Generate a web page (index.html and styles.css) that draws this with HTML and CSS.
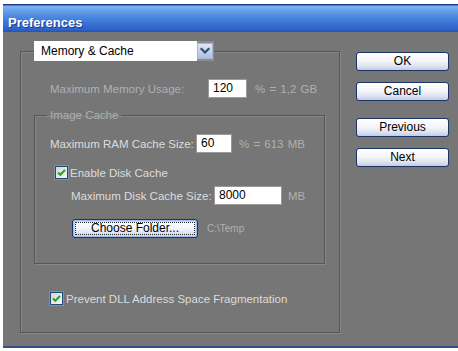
FILE: index.html
```html
<!DOCTYPE html>
<html>
<head>
<meta charset="utf-8">
<title>Preferences</title>
<link rel="stylesheet" href="styles.css">
</head>
<body>
<div class="window">
  <div class="titlebar">Preferences</div>
  <div class="client">
    <fieldset class="group group-outer">
      <legend class="combo-legend">
        <div class="combo">
          <span class="combo-text">Memory &amp; Cache</span>
          <span class="combo-well">
            <span class="combo-btn">
              <svg width="16" height="16" viewBox="0 0 16 16"><path d="M4.5 6 L8 9.5 L11.5 6" fill="none" stroke="#34497a" stroke-width="2.2" stroke-linecap="square"/></svg>
            </span>
          </span>
        </div>
      </legend>
      <div class="outer-body">
        <div class="row row-mem">
          <span class="lbl dim w-mem">Maximum Memory Usage:</span>
          <span class="field f-mem">120</span>
          <span class="unit dim u-mem">% = 1,2 GB</span>
        </div>
        <fieldset class="group group-inner">
          <legend class="inner-legend dim">Image Cache</legend>
          <div class="inner-body">
            <div class="row row-ram">
              <span class="lbl w-ram">Maximum RAM Cache Size:</span>
              <span class="field f-ram">60</span>
              <span class="unit dim u-ram">% = 613 MB</span>
            </div>
            <div class="row row-check">
              <span class="checkbox"><svg width="11" height="11" viewBox="0 0 11 11"><path d="M2 5.5 L4.3 7.8 L9 3" fill="none" stroke="#22a52a" stroke-width="2"/></svg></span>
              <span class="lbl check-lbl">Enable Disk Cache</span>
            </div>
            <div class="row row-disk">
              <span class="lbl w-disk">Maximum Disk Cache Size:</span>
              <span class="field f-disk">8000</span>
              <span class="unit dim u-disk">MB</span>
            </div>
            <div class="row row-folder">
              <button class="btn btn-focus">Choose Folder...</button>
              <span class="path dim">C:\Temp</span>
            </div>
          </div>
        </fieldset>
        <div class="row row-dll">
          <span class="checkbox"><svg width="11" height="11" viewBox="0 0 11 11"><path d="M2 5.5 L4.3 7.8 L9 3" fill="none" stroke="#22a52a" stroke-width="2"/></svg></span>
          <span class="lbl dll-lbl">Prevent DLL Address Space Fragmentation</span>
        </div>
      </div>
    </fieldset>
    <div class="buttons">
      <button class="btn side">OK</button>
      <button class="btn side b-cancel">Cancel</button>
      <button class="btn side b-prev">Previous</button>
      <button class="btn side b-next">Next</button>
    </div>
  </div>
</div>
</body>
</html>
```
FILE: styles.css
```css
html, body {
  margin: 0;
  padding: 0;
  background: #ffffff;
  font-family: "Liberation Sans", Arial, sans-serif;
}

.window {
  margin: 4px 0 0 3px;
  width: 455px;
}

.titlebar {
  height: 28px;
  box-sizing: border-box;
  padding: 11px 0 0 5px;
  font: bold 13px/15px "Liberation Sans", Arial, sans-serif;
  color: #ffffff;
  text-shadow: 1px 1px 0 #1a3a8a;
  background: linear-gradient(to bottom,
    #203c8c 0px, #203c8c 1px,
    #7fb4f2 2px, #6aa3ec 6px,
    #4f8ae2 12px, #3a74d6 19px,
    #2d60c4 26px, #2552b0 28px);
}

.client {
  height: 316px;
  box-sizing: border-box;
  background: #767676;
  border-bottom: 2px solid #3c4d8a;
  display: flex;
  align-items: flex-start;
  padding: 9px 0 0 17px;
}

.group {
  margin: 0;
  padding: 0;
  min-width: 0;
  box-sizing: border-box;
  border: 1px solid #565656;
  box-shadow: inset 1px 1px 0 #878787, 1px 1px 0 #878787;
}

.group-outer {
  width: 320px;
  height: 292px;
}

.combo-legend {
  padding: 0;
  margin-left: 13px;
}

.combo {
  display: flex;
  height: 20px;
}

.combo-text {
  width: 156px;
  height: 20px;
  background: #ffffff;
  color: #000;
  font-size: 12px;
  line-height: 20px;
  padding-left: 7px;
}

.combo-well {
  width: 17px;
  height: 20px;
  background: #8c8c8c;
  display: flex;
  align-items: center;
  justify-content: flex-start;
}

.combo-btn {
  width: 16px;
  height: 16px;
  box-sizing: border-box;
  border: 1px solid #a9b6d2;
  background: linear-gradient(to bottom, #dfe6f5, #c2cfe9 60%, #aebfe0);
  display: block;
}

.combo-btn svg {
  display: block;
  margin: -1px;
}

.outer-body {
  padding-left: 29px;
}

.row {
  display: flex;
  align-items: center;
  font-size: 11.5px;
  color: #dcdcdc;
  white-space: nowrap;
}

.dim {
  color: #b0b0b0;
}

.field {
  height: 19px;
  box-sizing: border-box;
  background: #ffffff;
  border: 1px solid #9a9a9a;
  color: #000;
  font-size: 12px;
  line-height: 17px;
  padding-left: 4px;
}

.row-mem {
  margin-top: 18px;
  height: 19px;
}

.w-mem { width: 158px; }
.f-mem { width: 39px; }
.u-mem { margin-left: 8px; word-spacing: 1px; }

.group-inner {
  width: 291px;
  margin: 10px 0 0 -16px;
}

.inner-legend {
  margin-left: 12px;
  padding: 0 3px;
  font-size: 11.5px;
  line-height: 14px;
}

.inner-body {
  padding: 0 0 25px 15px;
}

.row-ram {
  margin-top: 12px;
  height: 19px;
}

.w-ram { width: 146px; }
.f-ram { width: 36px; }
.u-ram { margin-left: 7px; word-spacing: 1px; }

.row-check {
  margin: 12px 0 0 5px;
  height: 15px;
}

.checkbox {
  width: 13px;
  height: 13px;
  box-sizing: border-box;
  border: 1px solid #1d4c7e;
  background: linear-gradient(135deg, #d6d6d0, #f6f6f4);
  display: flex;
  align-items: center;
  justify-content: center;
  box-shadow: 0 0 0 1px #8790a0;
}

.checkbox svg {
  display: block;
}

.check-lbl { margin-left: 2px; }

.row-disk {
  margin: 6px 0 0 21px;
  height: 19px;
}

.w-disk { width: 143px; }
.f-disk { width: 68px; }
.u-disk { margin-left: 6px; }

.row-folder {
  margin: 14px 0 0 22px;
  height: 19px;
}

.btn {
  height: 19px;
  box-sizing: border-box;
  padding: 0;
  border: 1px solid #1c3466;
  border-radius: 3px;
  background: linear-gradient(to bottom, #ffffff 0%, #f4f6fb 45%, #dfe5f1 75%, #c4cde0 100%);
  color: #000;
  font: 12px/15px "Liberation Sans", Arial, sans-serif;
  text-align: center;
}

.btn-focus {
  width: 126px;
  box-shadow: inset 0 0 0 1px #9fbdf0, inset 0 0 0 2px #c8daf8;
  outline: 1px dotted #2a2a2a;
  outline-offset: -4px;
}

.path {
  margin-left: 9px;
  font-size: 10px;
}

.row-dll {
  margin-top: 27px;
  height: 15px;
}

.dll-lbl { margin-left: 3px; }

.buttons {
  margin: 11px 0 0 16px;
  display: flex;
  flex-direction: column;
}

.side {
  width: 93px;
}

.b-cancel { margin-top: 11px; }
.b-prev { margin-top: 17px; }
.b-next { margin-top: 11px; }
```
